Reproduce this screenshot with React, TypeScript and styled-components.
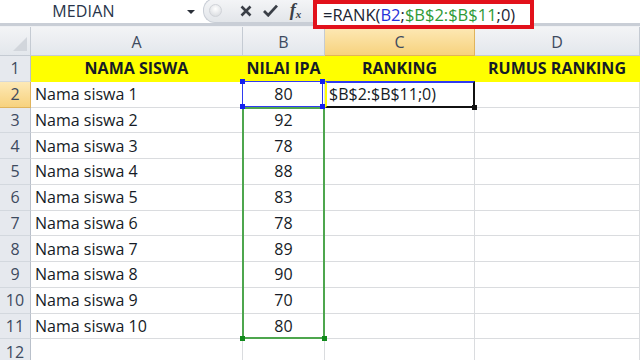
import React from 'react';
import styled, { createGlobalStyle, css } from 'styled-components';

const GlobalStyle = createGlobalStyle`
  html, body {
    margin: 0;
    padding: 0;
    background: #ffffff;
    overflow: hidden;
  }
  body {
    font-family: "Open Sans", "Liberation Sans", sans-serif;
  }
`;

const COLS = [31, 212, 82, 150, 165];
const HEAD_H = 29;
const ROW_H = 25.75;

const colLeft = (i: number) => COLS.slice(0, i).reduce((a, b) => a + b, 0);
const rowTop = (r: number) => HEAD_H + (r - 1) * ROW_H;

const Page = styled.div`
  width: 640px;
  height: 360px;
  overflow: hidden;
  display: flex;
  flex-direction: column;
`;

const FormulaBar = styled.div`
  height: 23px;
  display: flex;
  align-items: stretch;
  background: #ffffff;
  border-bottom: 3px solid #c9ced6;
  box-shadow: 0 1px 0 #eef0f3;
  position: relative;
  z-index: 2;
  flex-shrink: 0;
`;

const NameBox = styled.div`
  width: 203px;
  display: flex;
  align-items: center;
  font-size: 16px;
  color: #27344a;
  letter-spacing: 0.2px;
`;

const NameText = styled.span`
  flex: 1;
  text-align: center;
  margin-top: -1px;
  margin-right: 20px;
`;

const DropArrow = styled.span`
  width: 0;
  height: 0;
  border-left: 4px solid transparent;
  border-right: 4px solid transparent;
  border-top: 4px solid #2a2f38;
  margin-right: 8px;
`;

const ButtonGroup = styled.div`
  width: 104px;
  display: flex;
  align-items: center;
  background: linear-gradient(#f4f5f7, #e3e6ea);
  border: 1px solid #c9ced6;
  border-right: none;
  border-radius: 12px 0 0 12px;
  margin-top: -2px;
  padding-left: 5px;
`;

const Knob = styled.span`
  width: 11px;
  height: 11px;
  border-radius: 50%;
  background: radial-gradient(circle at 50% 35%, #ffffff, #d3d6db);
  border: 1px solid #d0d3d8;
  margin-right: 11px;
`;

const IconSlot = styled.span`
  width: 25px;
  display: flex;
  justify-content: center;
  align-items: center;
`;

const Fx = styled.span`
  font-family: "Liberation Serif", serif;
  font-style: italic;
  font-weight: bold;
  font-size: 18px;
  color: #3a3f47;
  line-height: 1;
  sub {
    font-size: 11px;
    vertical-align: -2px;
  }
`;

const FormulaBox = styled.div`
  box-sizing: border-box;
  width: 221px;
  height: 29px;
  margin-top: 0;
  border: 4px solid #e2111b;
  background: #ffffff;
  font-size: 16.5px;
  color: #1b2433;
  display: flex;
  align-items: center;
  padding-left: 6px;
  white-space: nowrap;
  align-self: flex-start;
`;

const Ref = styled.span<{ $color: string }>`
  color: ${(p) => p.$color};
`;

const Sheet = styled.div`
  position: relative;
  display: grid;
  grid-template-columns: ${COLS.map((c) => c + 'px').join(' ')};
  grid-template-rows: ${HEAD_H}px repeat(12, ${ROW_H}px);
  margin-top: 1px;
`;

const headBase = css`
  background: linear-gradient(#f3f4f6, #e3e7ec);
  color: #3d4a5e;
  border-right: 1px solid #c5cbd3;
  border-bottom: 1px solid #c5cbd3;
  display: flex;
  align-items: center;
  justify-content: center;
  font-size: 16px;
`;

const hotHead = css`
  background: linear-gradient(#fde9b6, #f7d27e);
  border-color: #e0b45c;
`;

const Corner = styled.div`
  ${headBase};
  position: relative;
  &::after {
    content: '';
    position: absolute;
    right: 3px;
    bottom: 4px;
    width: 0;
    height: 0;
    border-left: 14px solid transparent;
    border-bottom: 14px solid #d2d6dc;
  }
`;

const ColHead = styled.div<{ $hot?: boolean }>`
  ${headBase};
  padding-top: 2px;
  ${(p) => p.$hot && hotHead};
`;

const RowHead = styled.div<{ $hot?: boolean }>`
  ${headBase};
  background: #e6e9ee;
  border-right-color: #b9c0ca;
  border-bottom-color: #d3d8de;
  ${(p) => p.$hot && hotHead};
`;

const Cell = styled.div<{ $yellow?: boolean; $bold?: boolean; $align?: string }>`
  border-right: 1px solid #dadcdf;
  border-bottom: 1px solid #dadcdf;
  background: ${(p) => (p.$yellow ? '#ffff00' : '#ffffff')};
  font-weight: ${(p) => (p.$bold ? 700 : 400)};
  font-size: 16px;
  color: #151b26;
  display: flex;
  align-items: center;
  justify-content: ${(p) => p.$align || 'flex-start'};
  padding: 0 4px;
  white-space: nowrap;
  overflow: hidden;
  ${(p) => p.$yellow && 'border-right-color: #ffff00; border-bottom-color: #ffff00;'};
`;

const Frame = styled.div<{ $color: string; $w: number }>`
  position: absolute;
  border: ${(p) => p.$w}px solid ${(p) => p.$color};
  pointer-events: none;
  box-sizing: border-box;
`;

const Handle = styled.span<{ $color: string }>`
  position: absolute;
  width: 5px;
  height: 5px;
  background: ${(p) => p.$color};
`;

const rows = [
  ['Nama siswa 1', '80'],
  ['Nama siswa 2', '92'],
  ['Nama siswa 3', '78'],
  ['Nama siswa 4', '88'],
  ['Nama siswa 5', '83'],
  ['Nama siswa 6', '78'],
  ['Nama siswa 7', '89'],
  ['Nama siswa 8', '90'],
  ['Nama siswa 9', '70'],
  ['Nama siswa 10', '80'],
];

const box = (l: number, t: number, w: number, h: number) => ({ left: l, top: t, width: w, height: h });

const App: React.FC = () => {
  const bL = colLeft(2);
  const cL = colLeft(3);
  const r2 = rowTop(2);
  const r3 = rowTop(3);
  const r12 = rowTop(12);

  return (
    <Page>
      <GlobalStyle />
      <FormulaBar>
        <NameBox>
          <NameText>MEDIAN</NameText>
          <DropArrow />
        </NameBox>
        <ButtonGroup>
          <Knob />
          <IconSlot>
            <svg width="12" height="12" viewBox="0 0 12 12">
              <path d="M1.5 1.5 L10.5 10.5 M10.5 1.5 L1.5 10.5" stroke="#3a3f47" strokeWidth="2.6" />
            </svg>
          </IconSlot>
          <IconSlot>
            <svg width="15" height="13" viewBox="0 0 15 13">
              <path d="M1 7 L5.2 11.2 L14 1.6" stroke="#3a3f47" strokeWidth="2.8" fill="none" />
            </svg>
          </IconSlot>
          <IconSlot>
            <Fx>
              f<sub>x</sub>
            </Fx>
          </IconSlot>
        </ButtonGroup>
        <FormulaBox>
          =RANK(<Ref $color="#2532d8">B2</Ref>;<Ref $color="#2f9a36">$B$2:$B$11</Ref>;0)
        </FormulaBox>
      </FormulaBar>

      <Sheet>
        <Corner />
        <ColHead>A</ColHead>
        <ColHead>B</ColHead>
        <ColHead $hot>C</ColHead>
        <ColHead>D</ColHead>

        <RowHead>1</RowHead>
        <Cell $yellow $bold $align="center">NAMA SISWA</Cell>
        <Cell $yellow $bold $align="center">NILAI IPA</Cell>
        <Cell $yellow $bold $align="center">RANKING</Cell>
        <Cell $yellow $bold $align="center">RUMUS RANKING</Cell>

        {rows.map(([name, score], i) => (
          <React.Fragment key={name}>
            <RowHead $hot={i === 0}>{i + 2}</RowHead>
            <Cell>{name}</Cell>
            <Cell $align="center">{score}</Cell>
            <Cell>{i === 0 ? '$B$2:$B$11;0)' : ''}</Cell>
            <Cell />
          </React.Fragment>
        ))}

        <RowHead>12</RowHead>
        <Cell />
        <Cell />
        <Cell />
        <Cell />

        {/* green reference range B2:B11 */}
        <Frame $color="#4ea64e" $w={2} style={box(bL - 1, r3 - 1, COLS[2] + 1, r12 - r3 + 1)}>
          <Handle $color="#118a1b" style={{ left: -4, bottom: -4 }} />
          <Handle $color="#118a1b" style={{ right: -4, bottom: -4 }} />
        </Frame>

        {/* blue reference B2 */}
        <Frame $color="#2f3bf0" $w={1.5} style={box(bL - 1, r2 - 1, COLS[2] - 1, ROW_H)}>
          <Handle $color="#1420f0" style={{ left: -3, top: -3 }} />
          <Handle $color="#1420f0" style={{ right: -3, top: -3 }} />
          <Handle $color="#1420f0" style={{ left: -3, bottom: -3 }} />
          <Handle $color="#1420f0" style={{ right: -3, bottom: -3 }} />
        </Frame>

        {/* active cell C2 */}
        <Frame $color="#111111" $w={2} style={{ ...box(cL, r2 - 1, COLS[3], ROW_H + 1), borderTopColor: '#2f3bf0', borderLeftColor: '#ffff00' }}>
          <Handle $color="#111111" style={{ right: -4, bottom: -4 }} />
        </Frame>
      </Sheet>
    </Page>
  );
};

export default App;
